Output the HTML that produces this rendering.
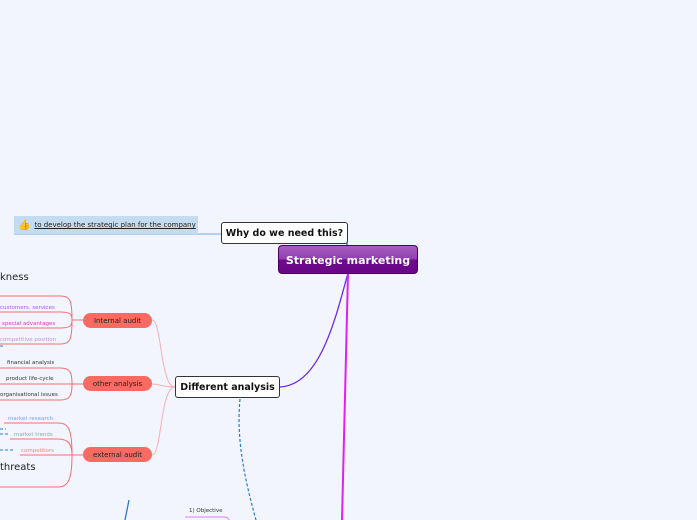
<!DOCTYPE html>
<html><head><meta charset="utf-8"><style>
html,body{margin:0;padding:0;width:697px;height:520px;overflow:hidden;background:#f3f5fe;font-family:"DejaVu Sans","Liberation Sans",sans-serif;}
svg{position:absolute;left:0;top:0}
.box{position:absolute;box-sizing:border-box;display:flex;align-items:center;justify-content:center;}
</style></head><body>
<svg width="697" height="520">
<g fill="none">
<path d="M14 234 H222" stroke="#9fc0ee" stroke-width="1.5"/>
<path d="M347 229 V246" stroke="#4a6fe0" stroke-width="1.5"/>
<path d="M280 387 C320 385 335 320 348 273" stroke="#6a2af0" stroke-width="1.3"/>
<path d="M348 273 L342 520" stroke="#e020f0" stroke-width="2"/>
<path d="M240 399 C236 440 245 480 256 520" stroke="#2a7ad0" stroke-width="1.2" stroke-dasharray="3,2"/>
<path d="M129 500 L125 520" stroke="#2a7ad0" stroke-width="1.3"/>
<path d="M185 517 H224 C228 517 230 520 230 524" stroke="#e080f0" stroke-width="1"/>
<path d="M175 387 C160 387 162 320 152 320" stroke="#f6b0b0" stroke-width="1"/>
<path d="M175 387 C160 387 162 384 152 384" stroke="#f6b0b0" stroke-width="1"/>
<path d="M175 387 C160 387 162 455 152 455" stroke="#f6b0b0" stroke-width="1"/>
<g stroke="#f07070" stroke-width="1">
<path d="M83 320 H72 C72 300 70 296 60 296 H0"/>
<path d="M83 320 H72 C72 314 70 312 60 312 H0"/>
<path d="M83 320 H72 C72 326 70 328 60 328 H0"/>
<path d="M83 320 H72 C72 340 70 344 60 344 H0"/>
<path d="M83 384 H72 C72 372 70 368 60 368 H0"/>
<path d="M83 384 H72 C72 384 70 384 60 384 H0"/>
<path d="M83 384 H72 C72 396 70 400 60 400 H0"/>
<path d="M83 455 H72 C72 428 68 423 58 423 H4"/>
<path d="M83 455 H72 C72 444 68 439 58 439 H10"/>
<path d="M83 455 H20"/>
<path d="M83 455 H72 C72 480 68 487 58 487 H0"/>
</g>
<g stroke="#2a7ad0" stroke-width="1" stroke-dasharray="3,2">
<path d="M0 429 H6"/><path d="M0 434 H8"/><path d="M0 450 H14"/>
<path d="M0 346 H4"/>
</g>
</g>
</svg>
<div class="box" style="left:14px;top:216px;width:184px;height:18px;background:#c4dcf0;justify-content:flex-start;padding-left:4px;font-size:7px;color:#222;"><span style="color:#f0b030;font-size:10px;margin-right:4px">👍</span><u>to develop the strategic plan for the company</u></div>
<div class="box" style="left:221px;top:222px;width:127px;height:22px;background:#fff;border:1px solid #333;border-radius:3px;font-weight:bold;font-size:9.5px;color:#111;padding-top:1px">Why do we need this?</div>
<div class="box" style="left:278px;top:245px;width:140px;height:29px;background:linear-gradient(#a65ec0 0%,#9040b0 48%,#6c0a8c 52%,#6a0888 100%);border:1px solid #4a0060;border-radius:4px;font-weight:bold;font-size:11px;color:#fff;padding-top:1px">Strategic marketing</div>
<div class="box" style="left:175px;top:376px;width:105px;height:22px;background:#fff;border:1px solid #333;border-radius:3px;font-weight:bold;font-size:9.5px;color:#111;padding-top:1px">Different analysis</div>
<div class="box" style="left:83px;top:313px;width:69px;height:15px;background:#f86a62;border-radius:8px;font-size:7px;color:#222;padding-top:1px">Internal audit</div>
<div class="box" style="left:83px;top:376px;width:69px;height:15px;background:#f86a62;border-radius:8px;font-size:7px;color:#222;padding-top:1px">other analysis</div>
<div class="box" style="left:83px;top:447px;width:69px;height:15px;background:#f86a62;border-radius:8px;font-size:7px;color:#222;padding-top:1px">external audit</div>
<div style="position:absolute;left:0;top:272px;font-size:10px;color:#222">kness</div>
<div style="position:absolute;left:0;top:462px;font-size:10px;color:#222">threats</div>
<div style="position:absolute;font-size:5.5px;left:0;top:305px;color:#b050f0">customers, services</div>
<div style="position:absolute;font-size:5.5px;left:2px;top:321px;color:#e030c0">special advantages</div>
<div style="position:absolute;font-size:5.5px;left:0;top:337px;color:#c090d0">competitive position</div>
<div style="position:absolute;font-size:5.5px;left:7px;top:360px;color:#333">financial analysis</div>
<div style="position:absolute;font-size:5.5px;left:6px;top:376px;color:#333">product life-cycle</div>
<div style="position:absolute;font-size:5.5px;left:0;top:392px;color:#333">organisational issues</div>
<div style="position:absolute;font-size:5.5px;left:8px;top:416px;color:#5ab0f0">market research</div>
<div style="position:absolute;font-size:5.5px;left:14px;top:432px;color:#60c0b0">market trends</div>
<div style="position:absolute;font-size:5.5px;left:21px;top:448px;color:#f08080">competitors</div>
<div style="position:absolute;font-size:5.5px;left:189px;top:508px;color:#333">1) Objective</div>
</body></html>
